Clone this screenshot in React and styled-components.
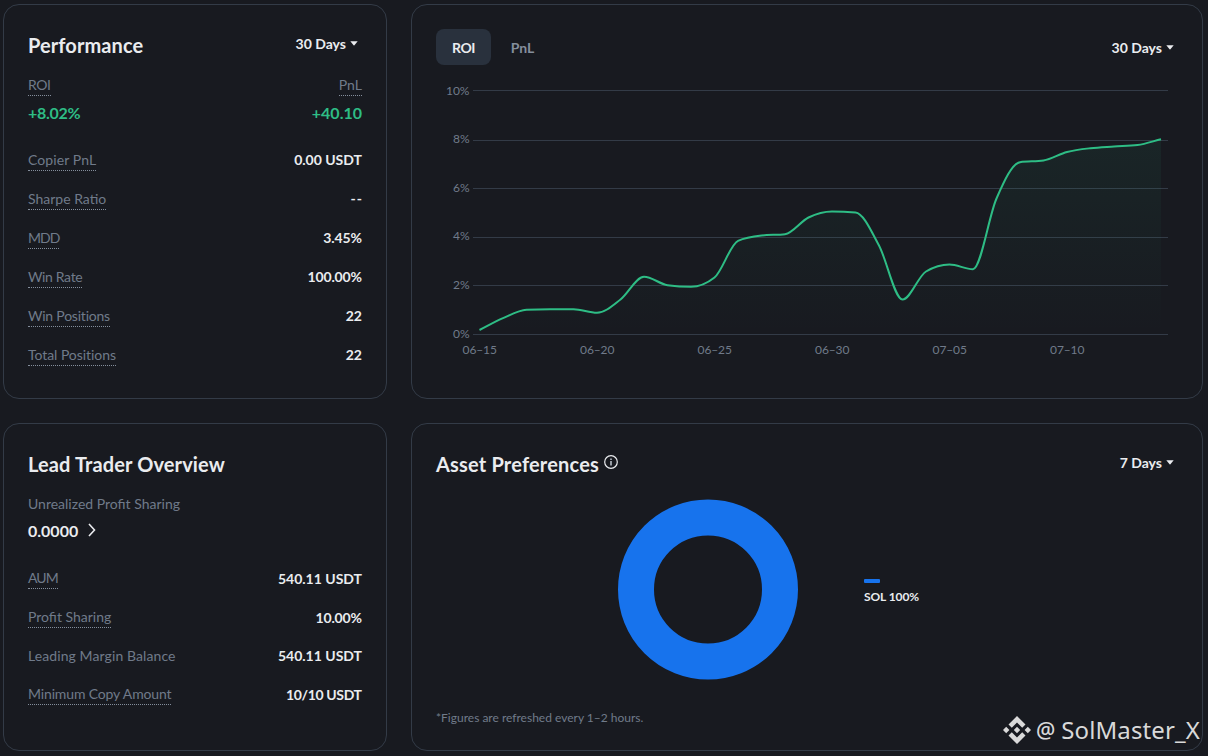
import React from 'react';
import styled, { createGlobalStyle } from 'styled-components';

const Global = createGlobalStyle`
  * { box-sizing: border-box; }
  html, body { margin: 0; background: #181a20; overflow: hidden; }
  body { font-family: Lato, "Liberation Sans", sans-serif; color: #eaecef; }
`;

const Page = styled.main`
  position: relative;
  width: 1208px;
  height: 756px;
  padding: 4px 5px 5px 3px;
  display: grid;
  grid-template-columns: 384px 792px;
  grid-template-rows: 395px 328px;
  gap: 24px;
`;
const Card = styled.section`
  border: 1px solid #333b47;
  border-radius: 16px;
  padding: 24px;
  display: flex;
  flex-direction: column;
`;
const Header = styled.header`
  display: flex;
  justify-content: space-between;
  height: ${(p) => p.$h || 33}px;
`;
const Title = styled.h2`
  margin: 0;
  display: flex;
  gap: 5px;
  font-size: 20px;
  line-height: 33px;
  font-weight: 700;
  white-space: nowrap;
  letter-spacing: ${(p) => p.$ls || 0}px;
`;
const Period = styled.button`
  border: 0;
  padding: 0;
  margin: 0 4px 0 0;
  background: none;
  color: inherit;
  font: 700 14px/${(p) => p.$lh}px Lato, sans-serif;
  display: flex;
  gap: 4px;
  white-space: nowrap;
  align-self: flex-start;
`;
const Caret = styled.svg`
  width: 8px;
  height: 5px;
  margin-top: ${(p) => p.$top}px;
`;
const Label = styled.span`
  font-size: 14px;
  line-height: 18px;
  height: 20px;
  color: #707a8a;
  white-space: nowrap;
  border-bottom: 1px ${(p) => (p.$plain ? 'none' : 'dotted')} #848e9c;
  letter-spacing: ${(p) => p.$ls || 0}px;
`;
const Value = styled.span`
  font-size: 14px;
  line-height: ${(p) => p.$lh || 18}px;
  font-weight: 700;
  letter-spacing: ${(p) => p.$ls || 0}px;
  margin-right: ${(p) => -(p.$ls || 0)}px;
`;
const Pair = styled.div`
  display: flex;
  justify-content: space-between;
  margin-top: ${(p) => p.$top}px;
`;
const Gain = styled.strong`
  font-size: 16px;
  line-height: 20px;
  height: 22px;
  font-weight: 700;
  color: #2ebd85;
  letter-spacing: ${(p) => p.$ls || 0}px;
`;
const Rows = styled.div`
  display: flex;
  flex-direction: column;
  gap: 19px;
  margin-top: ${(p) => p.$top}px;
`;
const Row = styled.div`
  display: flex;
  justify-content: space-between;
  height: ${(p) => p.$h || 20}px;
`;
const Balance = styled.div`
  display: flex;
  gap: 10px;
  margin-top: 5px;
  height: 24px;
  font-size: 16px;
  line-height: 22px;
  font-weight: 700;
`;
const Chevron = styled.svg`
  width: 8px;
  height: 14px;
  margin-top: 3px;
`;
const InfoIcon = styled.svg`
  width: 14px;
  height: 14px;
  margin-top: 7px;
`;
const Tabs = styled.nav`
  display: flex;
`;
const Tab = styled.button`
  border: 0;
  width: 55px;
  height: 36px;
  margin-right: 4px;
  border-radius: 8px;
  background: ${(p) => (p.$active ? '#29313d' : 'none')};
  color: ${(p) => (p.$active ? '#eaecef' : '#848e9c')};
  font: 700 14px/38px Lato, sans-serif;
  letter-spacing: ${(p) => (p.$active ? -0.4 : 0)}px;
  padding: 0;
`;
const Chart = styled.svg`
  display: block;
  width: 742px;
  height: 300px;
`;
const AxisText = styled.text`
  font-size: 12px;
  fill: #707a8a;
  text-anchor: ${(p) => p.$anchor};
  letter-spacing: ${(p) => p.$ls || 0}px;
`;
const DonutArea = styled.div`
  display: flex;
  align-items: flex-start;
  gap: 66px;
  margin: 18px 0 0 182px;
`;
const Legend = styled.div`
  margin-top: 80px;
  display: flex;
  flex-direction: column;
  gap: 5px;
  font-size: 12px;
  line-height: 17px;
  font-weight: 700;
  letter-spacing: -0.1px;
`;
const Swatch = styled.i`
  width: 16px;
  height: 4px;
  border-radius: 1px;
  background: #1773ed;
`;
const Note = styled.p`
  margin: 29px 0 0;
  font-size: 12px;
  line-height: 17px;
  color: #707a8a;
`;
const Watermark = styled.div`
  position: absolute;
  right: 8px;
  bottom: 10px;
  display: flex;
  align-items: center;
  font: 400 24px/32px "Noto Sans", sans-serif;
  color: #d9d9d9;
  white-space: nowrap;
`;
const Logo = styled.svg`
  width: 28px;
  height: 28px;
  margin-right: 5px;
`;
const At = styled.span`
  font-size: 21.5px;
  font-weight: 500;
  margin-right: 6px;
`;
const Handle = styled.span`
  letter-spacing: 0.12px;
`;

function PeriodPicker({ label, lh, top }) {
  return (
    <Period $lh={lh}>
      {label}
      <Caret $top={top} viewBox="0 0 8 5"><path d="M.3.3h7.4L4.4 4.3q-.4.4-.8 0z" fill="#eaecef" /></Caret>
    </Period>
  );
}

const stats = [
  { label: 'Copier PnL', value: '0.00 USDT', ls: 0.1 },
  { label: 'Sharpe Ratio', value: '--', vls: 1 },
  { label: 'MDD', value: '3.45%', ls: -1, vls: -0.1 },
  { label: 'Win Rate', value: '100.00%', ls: -0.35, vls: -0.15 },
  { label: 'Win Positions', value: '22', ls: -0.22 },
  { label: 'Total Positions', value: '22', ls: -0.06 },
];
const overview = [
  { label: 'AUM', value: '540.11 USDT', ls: -0.9, lh: 19 },
  { label: 'Profit Sharing', value: '10.00%', vls: -0.15, lh: 19 },
  { label: 'Leading Margin Balance', value: '540.11 USDT', plain: true, ls: 0.09, lh: 18, h: 19 },
  { label: 'Minimum Copy Amount', value: '10/10 USDT', ls: -0.14, vls: -0.35, lh: 20 },
];

const series = [329.5, 317.7, 309.2, 308.7, 308.7, 312.3, 299, 276.2, 284.7, 286.3, 277, 240.3, 235, 233.7, 217, 211, 212, 245, 299, 271, 264, 268.7, 198, 161.7, 160, 151.5, 147.7, 146, 144.5, 138.7];
const STEP = 23.5;
const points = series.map((y, i) => [43.5 + i * STEP, y - 64.5]);

// Monotone cubic: the tangent is flat wherever the direction changes.
function smoothPath(pts) {
  const slopes = pts.map((p, i) => {
    if (i === 0 || i === pts.length - 1) return null;
    const a = (p[1] - pts[i - 1][1]) / STEP;
    const b = (pts[i + 1][1] - p[1]) / STEP;
    if (a * b <= 0) return 0;
    return Math.sign(a) * Math.min(Math.abs(a + b) / 2, 2 * Math.abs(a), 2 * Math.abs(b));
  });
  const last = pts.length - 1;
  slopes[0] = (pts[1][1] - pts[0][1]) / STEP;
  slopes[last] = (pts[last][1] - pts[last - 1][1]) / STEP;
  const third = STEP / 3;
  return pts.slice(1).reduce((d, p, i) => {
    const q = pts[i];
    return `${d}C${q[0] + third} ${q[1] + slopes[i] * third} ${p[0] - third} ${p[1] - slopes[i + 1] * third} ${p[0]} ${p[1]}`;
  }, `M${pts[0][0]} ${pts[0][1]}`);
}
const line = smoothPath(points);
const yTicks = [[25.5, '10%'], [75.5, '8%'], [123.5, '6%'], [172.5, '4%'], [220.5, '2%'], [269.5, '0%']];
const yText = [30, 78, 127, 175, 224, 273];
const xTicks = ['06–15', '06–20', '06–25', '06–30', '07–05', '07–10'];

function RoiChart() {
  return (
    <Chart viewBox="0 0 742 300">
      <defs>
        <linearGradient id="area" x1="0" y1="0" x2="0" y2="1">
          <stop offset="0" stopColor="#2ebd85" stopOpacity=".07" />
          <stop offset="1" stopColor="#2ebd85" stopOpacity="0" />
        </linearGradient>
      </defs>
      {yTicks.map(([y, t], i) => (
        <g key={t}>
          <path d={`M37 ${y}H732`} stroke="#333b47" />
          <AxisText x="33.5" y={yText[i]} $anchor="end">{t}</AxisText>
        </g>
      ))}
      <path d={`${line}V269H43.5Z`} fill="url(#area)" />
      <path d={line} fill="none" stroke="#2ebd85" strokeWidth="2" strokeLinejoin="bevel" />
      {xTicks.map((t, i) => (
        <AxisText key={t} x={43.7 + i * 117.5} y="289" $anchor="middle" $ls={-0.1}>{t}</AxisText>
      ))}
    </Chart>
  );
}

function StatRow({ item }) {
  return (
    <Row $h={item.h}>
      <Label $plain={item.plain} $ls={item.ls}>{item.label}</Label>
      <Value $ls={item.vls} $lh={item.lh}>{item.value}</Value>
    </Row>
  );
}

export default function App() {
  return (
    <>
      <Global />
      <Page>
        <Card>
          <Header>
            <Title $ls={0.1}>Performance</Title>
            <PeriodPicker label="30 Days" lh={30} top={12} />
          </Header>
          <Pair $top={14}><Label $ls={-0.4}>ROI</Label><Label>PnL</Label></Pair>
          <Pair $top={7}><Gain $ls={-0.3}>+8.02%</Gain><Gain>+40.10</Gain></Pair>
          <Rows $top={26}>
            {stats.map((item) => <StatRow key={item.label} item={item} />)}
          </Rows>
        </Card>
        <Card>
          <Header $h={36}>
            <Tabs><Tab $active>ROI</Tab><Tab>PnL</Tab></Tabs>
            <PeriodPicker label="30 Days" lh={38} top={16} />
          </Header>
          <RoiChart />
        </Card>
        <Card>
          <Header><Title $ls={0.12}>Lead Trader Overview</Title></Header>
          <Pair $top={14}><Label $plain>Unrealized Profit Sharing</Label></Pair>
          <Balance>
            0.0000
            <Chevron viewBox="0 0 8 14"><path d="M1 1l5.5 6L1 13" fill="none" stroke="#eaecef" strokeWidth="1.6" /></Chevron>
          </Balance>
          <Rows $top={25}>
            {overview.map((item) => <StatRow key={item.label} item={item} />)}
          </Rows>
        </Card>
        <Card>
          <Header>
            <Title $ls={0.18}>
              Asset Preferences
              <InfoIcon viewBox="0 0 14 14">
                <circle cx="7" cy="7" r="6.3" fill="none" stroke="#eaecef" strokeWidth="1.2" />
                <path d="M7 3.4v1.6M7 6v4.5" stroke="#b7bdc6" strokeWidth="1.6" />
              </InfoIcon>
            </Title>
            <PeriodPicker label="7 Days" lh={30} top={12} />
          </Header>
          <DonutArea>
            <svg width="180" height="181"><circle cx="90" cy="90.5" r="72" fill="none" stroke="#1773ed" strokeWidth="36" /></svg>
            <Legend><Swatch />SOL 100%</Legend>
          </DonutArea>
          <Note>*Figures are refreshed every 1–2 hours.</Note>
        </Card>
        <Watermark>
          <Logo viewBox="0 0 28 28" fill="#d9d9d9">
            <path d="M14 0l8.5 8.5-3.3 3.3L14 6.6l-5.2 5.2-3.3-3.3zM14 28l8.5-8.5-3.3-3.3-5.2 5.2-5.2-5.2-3.3 3.3zM14 10.8l3.2 3.2-3.2 3.2-3.2-3.2zM3.2 10.8L6.4 14l-3.2 3.2L0 14zM24.8 10.8L28 14l-3.2 3.2-3.2-3.2z" />
          </Logo>
          <At>@</At>
          <Handle>SolMaster_X</Handle>
        </Watermark>
      </Page>
    </>
  );
}
